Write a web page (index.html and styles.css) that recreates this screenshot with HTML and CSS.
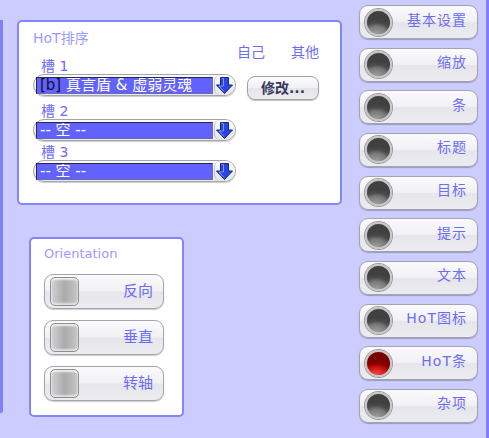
FILE: index.html
```html
<!DOCTYPE html>
<html lang="zh">
<head>
  <meta charset="UTF-8">
  <meta name="viewport" content="width=device-width, initial-scale=1.0">
  <link rel="stylesheet" href="styles.css">
</head>
<body>
  <div class="rail rail-left"></div>

  <div class="main">
    <div class="panel hot">
      <div class="panel-title">HoT排序</div>
      <div class="cols"><span>自己</span><span>其他</span></div>

      <div class="slot">
        <div class="slot-label">槽 1</div>
        <div class="slot-row">
          <div class="combo">
            <div class="combo-field"><span class="key">[b]</span> 真言盾 &amp; 虚弱灵魂</div>
            <div class="combo-btn">
              <svg width="17" height="17" viewBox="0 0 17 17"><path d="M4.5 0.5h8v7.5h4l-8 8.5l-8-8.5h4z" fill="#2d44e4" stroke="#17258a" stroke-width="1"/><path d="M5.5 1.5h2v7.5h-4.5l5 5.5" fill="none" stroke="#8194ff" stroke-width="1"/></svg>
            </div>
          </div>
          <div class="btn-edit">修改...</div>
        </div>
      </div>

      <div class="slot">
        <div class="slot-label">槽 2</div>
        <div class="slot-row">
          <div class="combo">
            <div class="combo-field">-- 空 --</div>
            <div class="combo-btn">
              <svg width="17" height="17" viewBox="0 0 17 17"><path d="M4.5 0.5h8v7.5h4l-8 8.5l-8-8.5h4z" fill="#2d44e4" stroke="#17258a" stroke-width="1"/><path d="M5.5 1.5h2v7.5h-4.5l5 5.5" fill="none" stroke="#8194ff" stroke-width="1"/></svg>
            </div>
          </div>
        </div>
      </div>

      <div class="slot">
        <div class="slot-label">槽 3</div>
        <div class="slot-row">
          <div class="combo">
            <div class="combo-field">-- 空 --</div>
            <div class="combo-btn">
              <svg width="17" height="17" viewBox="0 0 17 17"><path d="M4.5 0.5h8v7.5h4l-8 8.5l-8-8.5h4z" fill="#2d44e4" stroke="#17258a" stroke-width="1"/><path d="M5.5 1.5h2v7.5h-4.5l5 5.5" fill="none" stroke="#8194ff" stroke-width="1"/></svg>
            </div>
          </div>
        </div>
      </div>
    </div>

    <div class="panel orient">
      <div class="panel-title">Orientation</div>
      <div class="toggle"><span class="knob"></span><span class="toggle-text">反向</span></div>
      <div class="toggle"><span class="knob"></span><span class="toggle-text">垂直</span></div>
      <div class="toggle"><span class="knob"></span><span class="toggle-text">转轴</span></div>
    </div>
  </div>

  <div class="side">
    <div class="tab"><span class="led"></span><span class="tab-text">基本设置</span></div>
    <div class="tab"><span class="led"></span><span class="tab-text">缩放</span></div>
    <div class="tab"><span class="led"></span><span class="tab-text">条</span></div>
    <div class="tab"><span class="led"></span><span class="tab-text">标题</span></div>
    <div class="tab"><span class="led"></span><span class="tab-text">目标</span></div>
    <div class="tab"><span class="led"></span><span class="tab-text">提示</span></div>
    <div class="tab"><span class="led"></span><span class="tab-text">文本</span></div>
    <div class="tab"><span class="led"></span><span class="tab-text">HoT图标</span></div>
    <div class="tab"><span class="led on"></span><span class="tab-text">HoT条</span></div>
    <div class="tab"><span class="led"></span><span class="tab-text">杂项</span></div>
  </div>

  <div class="rail rail-right"></div>
</body>
</html>
```

FILE: styles.css
```css
body {
  margin: 0;
  width: 489px;
  height: 438px;
  overflow: hidden;
  display: flex;
  background-color: #ccccff;
  font-family: 'DejaVu Sans', 'Noto Sans CJK SC', sans-serif;
  color: #6c6cf8;
}

.rail {
  width: 3px;
  background-color: #8080ff;
  flex-shrink: 0;
}

.rail-left {
  margin-top: 20px;
  height: 393px;
  border-radius: 0 0 2px 0;
}

.rail-right {
  margin-left: 8px;
  height: 438px;
}

.main {
  width: 325px;
  padding-left: 14px;
  display: flex;
  flex-direction: column;
  flex-shrink: 0;
}

.panel {
  box-sizing: border-box;
  background-color: #ffffff;
  border: 2px solid #8484ff;
  border-radius: 5px;
}

.panel-title {
  font-size: 13px;
  line-height: 16px;
  color: #9b9bff;
}

/* HoT排序 */
.hot {
  margin-top: 20px;
  width: 325px;
  height: 185px;
  padding: 8px 0 0 14px;
}

.hot .panel-title {
  font-size: 14px;
}

.cols {
  display: flex;
  gap: 26px;
  padding-left: 204px;
  font-size: 14px;
  line-height: 12px;
  color: #6c6cf8;
}

.slot {
  margin-bottom: 3px;
}

.slot-label {
  padding-left: 8px;
  font-size: 14px;
  line-height: 16px;
  color: #6c6cf8;
}

.slot-row {
  display: flex;
  align-items: flex-start;
  gap: 11px;
}

.combo {
  box-sizing: border-box;
  width: 203px;
  height: 22px;
  display: flex;
  align-items: center;
  padding-left: 2px;
  border: 1px solid #a4a4ac;
  border-radius: 11px;
  background: linear-gradient(#fbfbfd, #e9e9ee);
  box-shadow: 0 1px 1px rgba(0, 0, 0, 0.2);
}

.combo-field {
  box-sizing: border-box;
  width: 177px;
  height: 17px;
  padding-left: 3px;
  border: 1px solid #262650;
  border-right-color: #6a6ab0;
  border-bottom-color: #6a6ab0;
  background-color: #6262ff;
  color: #ffffff;
  font-size: 15px;
  line-height: 15px;
  white-space: nowrap;
  overflow: hidden;
}

.key {
  color: #101030;
}

.combo-btn {
  flex: 1;
  height: 20px;
  display: flex;
  align-items: center;
  justify-content: center;
  padding-right: 2px;
  margin-left: 1px;
  border-left: 1px solid #c0c0c8;
  border-radius: 6px 10px 10px 6px;
  background: linear-gradient(#ffffff, #e4e4ea);
}

.btn-edit {
  box-sizing: border-box;
  width: 72px;
  height: 24px;
  margin-top: 2px;
  border: 1px solid #a0a0a8;
  border-radius: 8px;
  background: linear-gradient(#fdfdff 0%, #f0f0f4 50%, #e4e4ea 52%, #ececf0 100%);
  box-shadow: 0 1px 1px rgba(0, 0, 0, 0.25);
  text-align: center;
  font-size: 14px;
  line-height: 22px;
  font-weight: bold;
  color: #38385a;
}

/* Orientation */
.orient {
  margin-top: 32px;
  margin-left: 12px;
  width: 155px;
  height: 180px;
  padding: 7px 0 0 13px;
}

.orient .panel-title {
  margin-bottom: 12px;
}

.toggle {
  box-sizing: border-box;
  width: 120px;
  height: 35px;
  margin-bottom: 11px;
  display: flex;
  align-items: center;
  padding-left: 5px;
  border: 1px solid #a4a4ac;
  border-radius: 9px;
  background: linear-gradient(#fbfbfe 0%, #f1f1f5 48%, #e5e5eb 52%, #ececf0 100%);
  box-shadow: 0 1px 1px rgba(0, 0, 0, 0.2);
}

.knob {
  box-sizing: border-box;
  width: 29px;
  height: 29px;
  border: 1px solid #8e8e94;
  border-radius: 5px;
  background: linear-gradient(90deg, #d2d2d2, #ababab 50%, #c6c6c6);
  box-shadow: inset 0 2px 2px rgba(255, 255, 255, 0.8), inset 0 -2px 2px rgba(255, 255, 255, 0.6);
}

.toggle-text {
  margin-left: auto;
  padding: 0 10px 5px 0;
  font-size: 15px;
  color: #6c6cf8;
}

/* right tabs */
.side {
  margin-left: 17px;
  padding-top: 5px;
  width: 119px;
  display: flex;
  flex-direction: column;
  gap: 8.67px;
  flex-shrink: 0;
}

.tab {
  box-sizing: border-box;
  height: 34px;
  display: flex;
  align-items: center;
  padding-left: 5px;
  border: 1px solid #a4a4ac;
  border-radius: 9px;
  background: linear-gradient(#fbfbfe 0%, #f1f1f5 48%, #e5e5eb 52%, #ececf0 100%);
  box-shadow: 0 1px 1px rgba(0, 0, 0, 0.25);
}

.led {
  box-sizing: border-box;
  width: 27px;
  height: 27px;
  border-radius: 50%;
  border: 2px solid #c6c6c6;
  box-shadow: 0 0 0 1px #9a9a9a;
  background: radial-gradient(ellipse 90% 65% at 40% 100%, #a0a0a0 0%, #7a7a7a 50%, #4a4a4a 76%, #404040 100%);
}

.led.on {
  background: radial-gradient(ellipse 90% 65% at 40% 100%, #f45050 0%, #cc1414 50%, #900000 76%, #7a0000 100%);
}

.tab-text {
  margin-left: auto;
  padding: 0 10px 7px 0;
  font-size: 14px;
  letter-spacing: 1px;
  color: #6c6cf8;
}
```
